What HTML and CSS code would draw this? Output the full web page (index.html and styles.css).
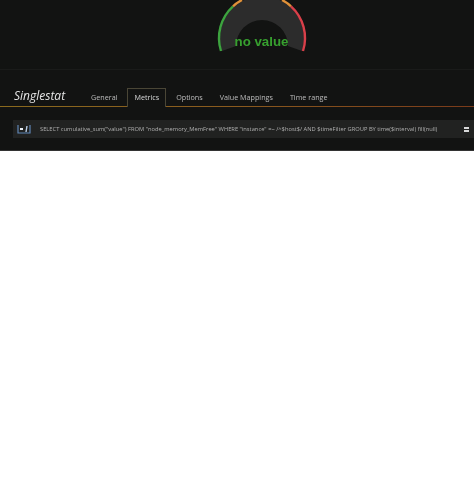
FILE: index.html
```html
<!DOCTYPE html>
<html lang="en">
<head>
    <meta charset="UTF-8">
    <title>Singlestat</title>
    <link rel="stylesheet" href="styles.css">
</head>
<body>
    <div class="editor">
        <div class="gauge-panel">
            <svg class="gauge" width="100" height="60" viewBox="212 0 100 60">
                <!-- track -->
                <path d="M222 51 A42 42 0 1 1 302 51 L288 46 A25 25 0 1 0 236 46 Z" fill="#2c2c2c"/>
                <!-- thresholds -->
                <path d="M221 51 A43 43 0 0 1 233 6.3" class="arc arc-green"/>
                <path d="M233 6.3 A43 43 0 0 1 242 0" class="arc arc-orange"/>
                <path d="M282 0 A43 43 0 0 1 291 6.3" class="arc arc-orange"/>
                <path d="M291 6.3 A43 43 0 0 1 303 51" class="arc arc-red"/>
                <text x="261.5" y="46" class="gauge-value">no value</text>
            </svg>
        </div>

        <div class="tabs-header">
            <div class="panel-title">Singlestat</div>
            <div class="tabs">
                <a href="#" class="tab">General</a>
                <a href="#" class="tab active">Metrics</a>
                <a href="#" class="tab">Options</a>
                <a href="#" class="tab">Value Mappings</a>
                <a href="#" class="tab">Time range</a>
            </div>
        </div>

        <div class="query-row">
            <div class="query-icon">
                <svg width="14" height="10" viewBox="0 0 14 10">
                    <path d="M1 1 V9 H13 V1" fill="none" stroke="#5f86b5" stroke-width="1.2"/>
                    <path d="M3 5 L6 5" stroke="#e8eef5" stroke-width="2"/>
                    <path d="M10 2 L9 8" stroke="#b9cde4" stroke-width="1.4"/>
                </svg>
            </div>
            <div class="query-text">SELECT cumulative_sum("value") FROM "node_memory_MemFree" WHERE "instance" =~ /^$host$/ AND $timeFilter GROUP BY time($interval) fill(null)</div>
            <div class="query-menu"></div>
        </div>
    </div>
</body>
</html>
```

FILE: styles.css
```css
* {
    margin: 0;
    padding: 0;
    box-sizing: border-box;
}

body {
    background-color: #fff;
    font-family: "Open Sans", sans-serif;
    overflow: hidden;
}

.editor {
    height: 151px;
    background-color: #121312;
    border-bottom: 1px solid #333;
    overflow: hidden;
    filter: blur(0.35px);
}

.gauge-panel {
    height: 70px;
    display: flex;
    justify-content: center;
    padding-left: 50px;
    border-bottom: 1px solid #1a1b1a;
}

.gauge {
    display: block;
    overflow: visible;
}

.arc {
    fill: none;
    stroke-width: 2.4;
}

.arc-green {
    stroke: #3da33f;
}

.arc-orange {
    stroke: #e0913a;
}

.arc-red {
    stroke: #d9404a;
}

.gauge-value {
    font-family: "Liberation Sans", sans-serif;
    font-size: 13.3px;
    font-weight: 700;
    fill: #37a02f;
    text-anchor: middle;
}

.tabs-header {
    height: 37px;
    display: flex;
    align-items: flex-end;
    padding-left: 14px;
    border-bottom: 1px solid;
    border-image: linear-gradient(to right, #8a6a1e, #8a5a1e 50%, #7a3a1a) 1;
}

.panel-title {
    width: 70px;
    padding-bottom: 2px;
    font-size: 12px;
    font-style: italic;
    color: #e6e6e6;
}

.tabs {
    display: flex;
    margin-bottom: -1px;
}

.tab {
    height: 19px;
    padding: 3px 6px 0;
    font-size: 7.2px;
    line-height: 11px;
    color: #bcbcbc;
    text-decoration: none;
    border: 1px solid transparent;
    border-bottom: 0;
}

.tab + .tab {
    margin-left: 3px;
}

.tab.active {
    color: #d8d9da;
    background-color: #121312;
    border-color: #4a4636;
}

.query-row {
    display: flex;
    align-items: center;
    height: 18px;
    margin: 13px 0 0 13px;
    background-color: #212221;
}

.query-icon {
    width: 21px;
    height: 100%;
    display: flex;
    align-items: center;
    justify-content: center;
    margin-right: 6px;
}

.query-text {
    flex: 1;
    font-size: 5.75px;
    color: #b0b0b0;
    white-space: nowrap;
}

.query-menu {
    width: 5px;
    height: 5px;
    margin-right: 5px;
    border-top: 2px solid #d8d9da;
    border-bottom: 2px solid #d8d9da;
}
```
